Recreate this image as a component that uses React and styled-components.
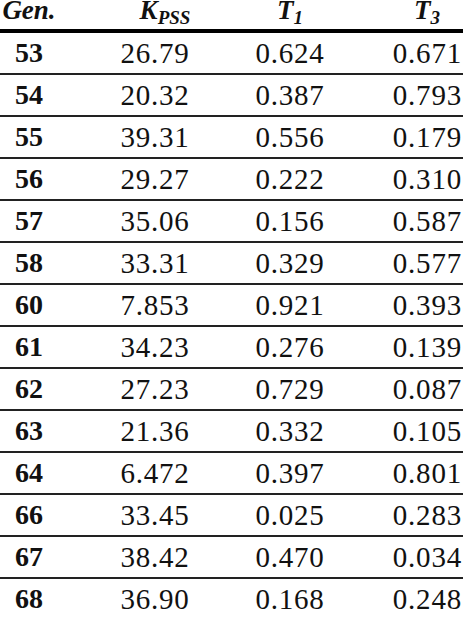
import React from 'react'
import styled, { createGlobalStyle } from 'styled-components'

const GlobalStyle = createGlobalStyle`
html, body {
  margin: 0;
  padding: 0;
  background: #fff;
  overflow: hidden;
}
`

const Table = styled.div`
width: 463px;
font-family: "Liberation Serif", "Times New Roman", serif;
color: #111;
`

const Row = styled.div`
display: grid;
grid-template-columns: 58px 194px 76px 1fr;
align-items: center;
height: ${p => (p.$head ? '29px' : '40px')};
border-bottom: ${p => (p.$head ? '4px solid #000' : p.$last ? 'none' : '2px solid #222')};
`

const HeadCell = styled.div`
justify-self: center;
align-self: start;
margin-left: ${p => p.$shift || 0}px;
font-size: 27px;
line-height: 21px;
font-weight: 700;
font-style: italic;
white-space: nowrap;

&:last-child {
  justify-self: end;
  margin-right: 23px;
}
`

const Sub = styled.sub`
font-size: 19px;
vertical-align: -5px;
line-height: 0;
`

const Cell = styled.div`
justify-self: center;
font-size: ${p => (p.$bold ? '28px' : '29px')};
letter-spacing: ${p => (p.$bold ? '0' : '0.8px')};
line-height: 1;
font-weight: ${p => (p.$bold ? 700 : 400)};
white-space: nowrap;

&:last-child {
  justify-self: end;
  margin-right: 1px;
}
`

const data = [
  ['53', '26.79', '0.624', '0.671'],
  ['54', '20.32', '0.387', '0.793'],
  ['55', '39.31', '0.556', '0.179'],
  ['56', '29.27', '0.222', '0.310'],
  ['57', '35.06', '0.156', '0.587'],
  ['58', '33.31', '0.329', '0.577'],
  ['60', '7.853', '0.921', '0.393'],
  ['61', '34.23', '0.276', '0.139'],
  ['62', '27.23', '0.729', '0.087'],
  ['63', '21.36', '0.332', '0.105'],
  ['64', '6.472', '0.397', '0.801'],
  ['66', '33.45', '0.025', '0.283'],
  ['67', '38.42', '0.470', '0.034'],
  ['68', '36.90', '0.168', '0.248'],
]

const App = () => {
  return (
    <>
      <GlobalStyle />
      <Table>
        <Row $head>
          <HeadCell>Gen.</HeadCell>
          <HeadCell $shift={20}>K<Sub>PSS</Sub></HeadCell>
          <HeadCell>T<Sub>1</Sub></HeadCell>
          <HeadCell>T<Sub>3</Sub></HeadCell>
        </Row>
        {data.map((r, i) => (
          <Row key={r[0]} $last={i === data.length - 1}>
            <Cell $bold>{r[0]}</Cell>
            <Cell>{r[1]}</Cell>
            <Cell>{r[2]}</Cell>
            <Cell>{r[3]}</Cell>
          </Row>
        ))}
      </Table>
    </>
  )
}

export default App
